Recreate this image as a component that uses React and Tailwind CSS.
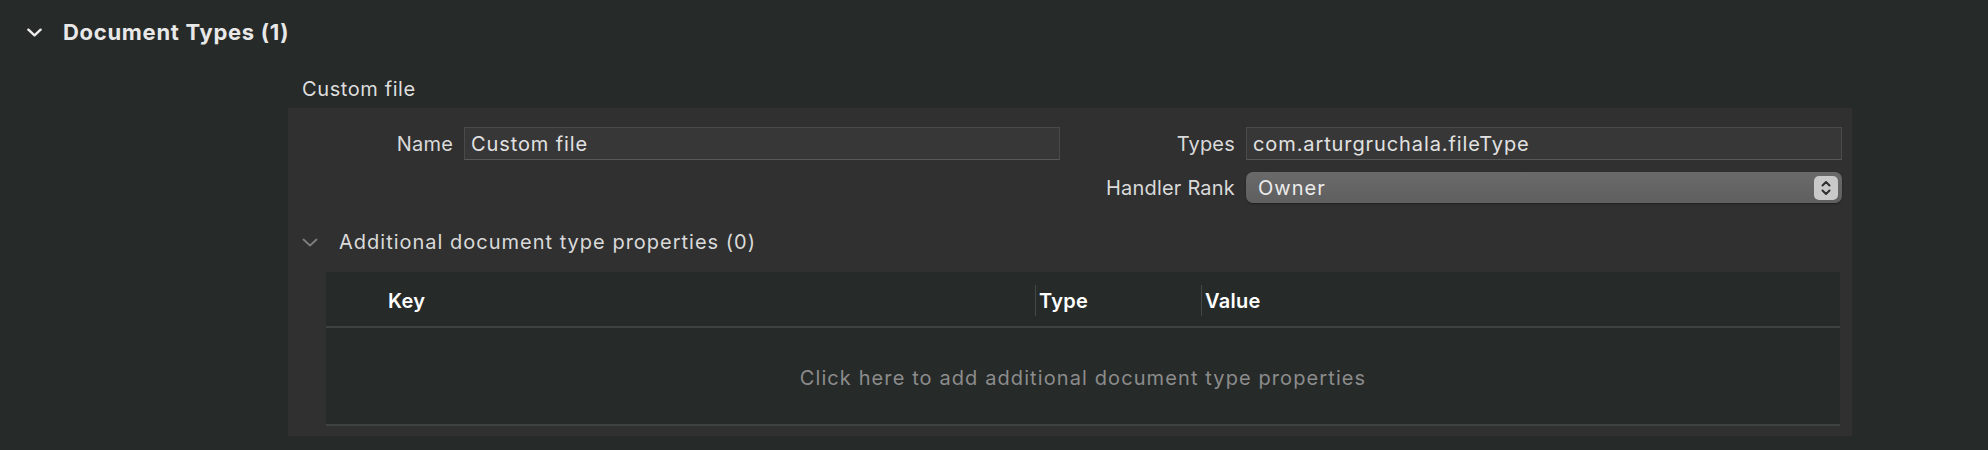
import { useState } from 'react';

// Chevron used for section disclosure
const Chevron = ({ className, strokeWidth = 2.4 }) => (
  <svg viewBox="0 0 16 9" className={className} fill="none">
    <path d="M1.5 1.5 L8 7.5 L14.5 1.5" stroke="currentColor" strokeWidth={strokeWidth} strokeLinecap="round" strokeLinejoin="round" />
  </svg>
);

const Stepper = () => (
  <div className="w-[24px] h-[24px] rounded-[5px] bg-[#c9c9c9] flex items-center justify-center">
    <svg viewBox="0 0 24 24" className="w-[24px] h-[24px]" fill="none">
      <path d="M8.5 9.5 L12 6 L15.5 9.5" stroke="#2e2e2e" strokeWidth="2" strokeLinecap="round" strokeLinejoin="round" />
      <path d="M8.5 14.5 L12 18 L15.5 14.5" stroke="#2e2e2e" strokeWidth="2" strokeLinecap="round" strokeLinejoin="round" />
    </svg>
  </div>
);

const TextField = ({ value }) => (
  <div className="w-[596px] h-[33px] bg-[#373737] border border-[#4a4a4a] border-b-[#575757] flex items-center px-[6px] text-[20px] leading-[24px] tracking-[0.9px] text-[#e2e2e2]">
    {value}
  </div>
);

const Label = ({ children, className = '' }) => (
  <div className={`text-right text-[20px] leading-[24px] tracking-[0.2px] text-[#dadada] ${className}`}>{children}</div>
);

export default function App() {
  const [rank] = useState('Owner');

  return (
    <div className="w-full h-[450px] bg-[#262a29] font-['Inter',sans-serif] overflow-hidden">
      {/* Section header */}
      <div className="flex items-center pt-[18px] pl-[27px]">
        <Chevron className="w-[15px] h-[9px] text-[#ececec]" strokeWidth={2.6} />
        <div className="ml-[21px] text-[22px] leading-[28px] font-bold text-[#e8e8e8] tracking-[0.7px]">
          Document Types (1)
        </div>
      </div>

      <div className="ml-[302px] mt-[31px] text-[20px] leading-[24px] tracking-[0.6px] text-[#dedede]">Custom file</div>

      {/* Document type panel */}
      <div className="mt-[7px] ml-[288px] w-[1564px] bg-[#303030] pt-[19px] pb-[10px]">
        <div className="flex items-start">
          <div className="flex items-center">
            <Label className="w-[165px]">Name</Label>
            <div className="ml-[11px]">
              <TextField value="Custom file" />
            </div>
          </div>
          <div className="ml-[35px] flex flex-col gap-[12px]">
            <div className="flex items-center">
              <Label className="w-[140px]">Types</Label>
              <div className="ml-[11px]">
                <TextField value="com.arturgruchala.fileType" />
              </div>
            </div>
            <div className="flex items-center">
              <Label className="w-[140px]">Handler Rank</Label>
              <div className="ml-[11px] w-[596px] h-[31px] rounded-[7px] bg-gradient-to-b from-[#6a6a6a] to-[#5f5f5f] shadow-[0_1px_2px_rgba(0,0,0,0.35)] flex items-center justify-between pl-[12px] pr-[4px]">
                <span className="text-[20px] leading-[24px] tracking-[1px] text-[#ececec]">{rank}</span>
                <Stepper />
              </div>
            </div>
          </div>
        </div>

        {/* Additional properties disclosure */}
        <div className="mt-[27px] flex items-center pl-[14px]">
          <Chevron className="w-[16px] h-[9px] text-[#7e7e7e]" strokeWidth={1.8} />
          <div className="ml-[21px] text-[20px] leading-[24px] tracking-[1px] text-[#dadada]">
            Additional document type properties (0)
          </div>
        </div>

        <div className="mt-[18px] ml-[38px] mr-[12px] bg-[#262a29]">
          <div className="h-[56px] flex items-center pt-[3px] border-b-2 border-[#3f4242] text-[20px] leading-[24px] font-semibold tracking-[0.3px] text-white">
            <div className="w-[709px] pl-[62px]">Key</div>
            <div className="w-[166px] flex items-center">
              <div className="w-px h-[31px] bg-[#454848]" />
              <span className="ml-[3px]">Type</span>
            </div>
            <div className="flex-1 flex items-center">
              <div className="w-px h-[31px] bg-[#454848]" />
              <span className="ml-[3px]">Value</span>
            </div>
          </div>
          <div className="h-[98px] flex items-center justify-center pt-[4px] border-b-2 border-[#3f4242] text-[20px] leading-[24px] tracking-[1.1px] text-[#8c8c8c]">
            Click here to add additional document type properties
          </div>
        </div>
      </div>
    </div>
  );
}
